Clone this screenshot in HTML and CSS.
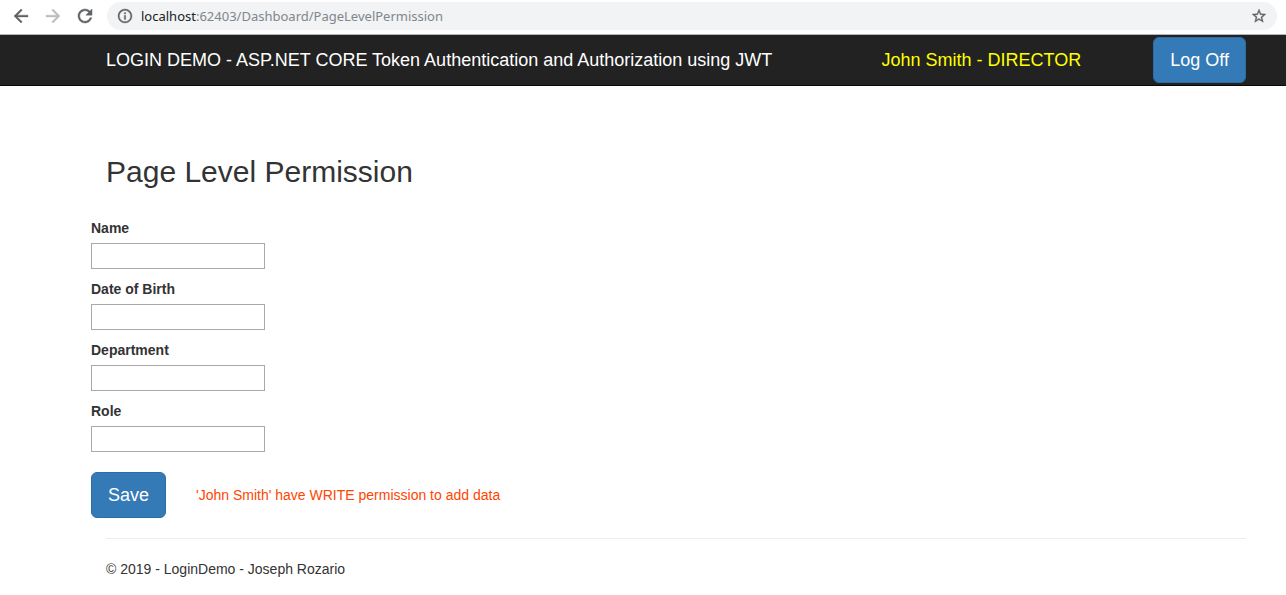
FILE: index.html
```
<!DOCTYPE html>
<html lang="en">
<head>
    <meta charset="UTF-8">
    <meta name="viewport" content="width=device-width, initial-scale=1.0">
    <title>Page Level Permission - LoginDemo</title>
    <link rel="stylesheet" href="styles.css">
</head>
<body>
    <div class="browser-bar">
        <button type="button" class="icon-btn" aria-label="Back">
            <svg viewBox="4 4 16 16"><path d="M20 11H7.83l5.59-5.59L12 4l-8 8 8 8 1.41-1.41L7.83 13H20v-2z"/></svg>
        </button>
        <button type="button" class="icon-btn disabled" aria-label="Forward" disabled>
            <svg viewBox="4 4 16 16"><path d="M12 4l-1.41 1.41L16.17 11H4v2h12.17l-5.58 5.59L12 20l8-8z"/></svg>
        </button>
        <button type="button" class="icon-btn" aria-label="Reload">
            <svg viewBox="4 4 16 16"><path d="M17.65 6.35C16.2 4.9 14.21 4 12 4c-4.42 0-7.99 3.58-7.99 8s3.57 8 7.99 8c3.73 0 6.84-2.55 7.73-6h-2.08c-.82 2.33-3.04 4-5.65 4-3.31 0-6-2.69-6-6s2.69-6 6-6c1.66 0 3.14.69 4.22 1.78L13 11h7V4l-2.35 2.35z"/></svg>
        </button>
        <div class="address">
            <svg class="info" viewBox="2 2 20 20"><path d="M11 7h2v2h-2zm0 4h2v6h-2zm1-9C6.48 2 2 6.48 2 12s4.48 10 10 10 10-4.48 10-10S17.52 2 12 2zm0 18c-4.41 0-8-3.59-8-8s3.59-8 8-8 8 3.59 8 8-3.59 8-8 8z"/></svg>
            <span class="url"><span class="host">localhost</span>:62403/Dashboard/PageLevelPermission</span>
            <svg class="star" viewBox="2 2 20 20"><path d="M22 9.24l-7.19-.62L12 2 9.19 8.63 2 9.24l5.46 4.73L5.82 21 12 17.27 18.18 21l-1.63-7.03L22 9.24zM12 15.4l-3.76 2.27 1-4.28-3.32-2.88 4.38-.38L12 6.1l1.71 4.04 4.38.38-3.32 2.88 1 4.28L12 15.4z"/></svg>
        </div>
    </div>

    <nav class="navbar">
        <a class="navbar-brand" href="#">LOGIN DEMO - ASP.NET CORE Token Authentication and Authorization using JWT</a>
        <span class="user">John Smith - DIRECTOR</span>
        <button type="button" class="btn">Log Off</button>
    </nav>

    <main class="container">
        <h2>Page Level Permission</h2>
        <form class="permission-form">
            <div class="form-group">
                <label for="name">Name</label>
                <input type="text" id="name">
            </div>
            <div class="form-group">
                <label for="dob">Date of Birth</label>
                <input type="text" id="dob">
            </div>
            <div class="form-group">
                <label for="department">Department</label>
                <input type="text" id="department">
            </div>
            <div class="form-group">
                <label for="role">Role</label>
                <input type="text" id="role">
            </div>
            <div class="form-actions">
                <button type="button" class="btn">Save</button>
                <span class="message">'John Smith' have WRITE permission to add data</span>
            </div>
        </form>
        <hr>
        <footer>&copy; 2019 - LoginDemo - Joseph Rozario</footer>
    </main>
</body>
</html>
```
FILE: styles.css
```
* {
    box-sizing: border-box;
}

body {
    margin: 0;
    font-family: "Helvetica Neue", "Liberation Sans", Arial, sans-serif;
    font-size: 14px;
    line-height: 20px;
    color: #333;
    background: #fff;
}

/* Browser toolbar */
.browser-bar {
    display: flex;
    align-items: center;
    gap: 18px;
    height: 35px;
    padding: 0 9px 3px 14px;
    border-bottom: 1px solid #b6b4b6;
}

.browser-bar svg {
    display: block;
    flex: none;
    width: 14px;
    height: 14px;
    fill: #5f6368;
    stroke: #5f6368;
    stroke-width: 0.5;
    overflow: visible;
}

.icon-btn {
    padding: 0;
    border: none;
    background: none;
}

.icon-btn.disabled svg {
    fill: #babcbe;
    stroke: #babcbe;
}

.address {
    display: flex;
    flex: 1;
    align-items: center;
    gap: 9px;
    height: 28px;
    margin-left: -3px;
    padding: 0 11px;
    border-radius: 14px;
    background: #f1f3f4;
}

.url {
    flex: 1;
    font-family: "Segoe UI", "Noto Sans", sans-serif;
    font-size: 13px;
    color: #80868b;
}

.host {
    color: #202124;
}

/* Navbar */
.navbar {
    display: flex;
    align-items: center;
    min-height: 51px;
    padding: 2px 40px 2px 106px;
    border-bottom: 1px solid #080808;
    background: #222;
    font-size: 18px;
}

.navbar-brand {
    color: #fff;
    text-decoration: none;
}

.user {
    margin-left: auto;
    margin-right: 72px;
    color: #ff0;
}

.btn {
    padding: 10px 16px;
    border: 1px solid #2e6da4;
    border-radius: 6px;
    background: #337ab7;
    color: #fff;
    font-family: inherit;
    font-size: 18px;
    line-height: 24px;
    cursor: pointer;
}

/* Page content */
.container {
    padding: 69px 40px 0 106px;
}

h2 {
    margin: 0 0 30px;
    font-size: 30px;
    font-weight: 500;
    line-height: 33px;
}

.permission-form {
    margin-left: -15px;
}

.form-group {
    margin-bottom: 10px;
}

label {
    display: block;
    margin-bottom: 5px;
    font-weight: bold;
}

input {
    display: block;
    width: 174px;
    height: 26px;
    padding: 2px;
    border: 1px solid #a9a9a9;
    font: inherit;
}

.form-actions {
    display: flex;
    align-items: center;
    gap: 30px;
    margin-top: 20px;
}

.message {
    color: #ff4500;
}

hr {
    margin: 20px 0;
    border: 0;
    border-top: 1px solid #eee;
}
```
